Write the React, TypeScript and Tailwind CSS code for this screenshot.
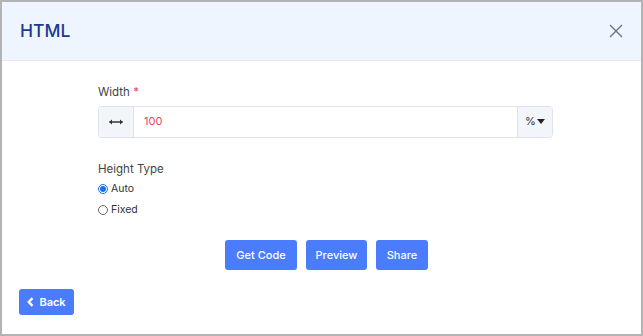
import React from "react";

export default function App() {
  return (
    <div
      className="w-[643px] h-[336px] bg-white border-2 border-[#b3b3b3] flex flex-col overflow-hidden"
      style={{ fontFamily: "Inter, 'Noto Sans', sans-serif" }}
    >
      <div className="h-[59px] shrink-0 bg-[#eef5ff] border-b border-[#e3e8f0] flex items-center justify-between pl-[18px] pr-[18px]">
        <div className="text-[17.5px] font-medium text-[#1b3a8f] tracking-[0px]">HTML</div>
        <svg width="14" height="14" viewBox="0 0 14 14" className="text-[#6b7280]">
          <path d="M1 1L13 13M13 1L1 13" stroke="currentColor" strokeWidth="1.4" />
        </svg>
      </div>
      <div className="flex-1 flex flex-col">
        <div className="pl-[96px] pr-[88px] pt-[26px]">
          <div className="text-[11.5px] text-[#444] leading-none">
            Width <span className="text-[#f0446a]">*</span>
          </div>
          <div className="mt-[7px] flex h-[32px] border border-[#dfe3ec] rounded-[4px] overflow-hidden">
            <div className="w-[35px] bg-[#f2f5f9] border-r border-[#dfe3ec] flex items-center justify-center">
              <svg width="14" height="6" viewBox="0 0 14 6">
                <path d="M0.5 3H13.5" stroke="#333" strokeWidth="1.6" />
                <path d="M0 3L3 0.5V5.5Z M14 3L11 0.5V5.5Z" fill="#333" />
              </svg>
            </div>
            <div className="flex-1 flex items-center pl-[10px] text-[11px] text-[#f0446a]">100</div>
            <div className="w-[35px] bg-[#f2f5f9] border-l border-[#dfe3ec] flex items-center justify-center gap-[1px] text-[11px] text-[#333]">
              <span>%</span>
              <svg width="8" height="5" viewBox="0 0 8 5">
                <path d="M0 0H8L4 5Z" fill="#222" />
              </svg>
            </div>
          </div>
          <div className="mt-[26px] text-[11.5px] text-[#444] leading-none">Height Type</div>
          <div className="mt-[7px] flex items-center gap-[2px] text-[10.5px] text-[#333] leading-none h-[14px]">
            <span className="w-[10px] h-[10px] rounded-full border border-[#1a73e8] flex items-center justify-center">
              <span className="w-[6px] h-[6px] rounded-full bg-[#1a73e8]" />
            </span>
            <span className="ml-[1px]">Auto</span>
          </div>
          <div className="mt-[7px] flex items-center gap-[2px] text-[10.5px] text-[#333] leading-none h-[14px]">
            <span className="w-[10px] h-[10px] rounded-full border border-[#666]" />
            <span className="ml-[1px]">Fixed</span>
          </div>
        </div>
        <div className="mt-[23px] flex justify-center gap-[9px] ml-[10px]">
          <button className="h-[30px] w-[72px] bg-[#4a7cfb] text-white text-[11px] font-medium rounded-[3px]">Get Code</button>
          <button className="h-[30px] w-[61px] bg-[#4a7cfb] text-white text-[11px] font-medium rounded-[3px]">Preview</button>
          <button className="h-[30px] w-[52px] bg-[#4a7cfb] text-white text-[11px] font-medium rounded-[3px]">Share</button>
        </div>
        <div className="mt-[19px] pl-[17px]">
          <button className="h-[26px] w-[55px] bg-[#4a7cfb] text-white text-[11px] font-semibold rounded-[3px] flex items-center justify-center gap-[5px]">
            <svg width="7" height="10" viewBox="0 0 7 10">
              <path d="M5.5 1.2L1.8 5L5.5 8.8" stroke="white" strokeWidth="2.4" fill="none" />
            </svg>
            <span>Back</span>
          </button>
        </div>
      </div>
    </div>
  );
}
